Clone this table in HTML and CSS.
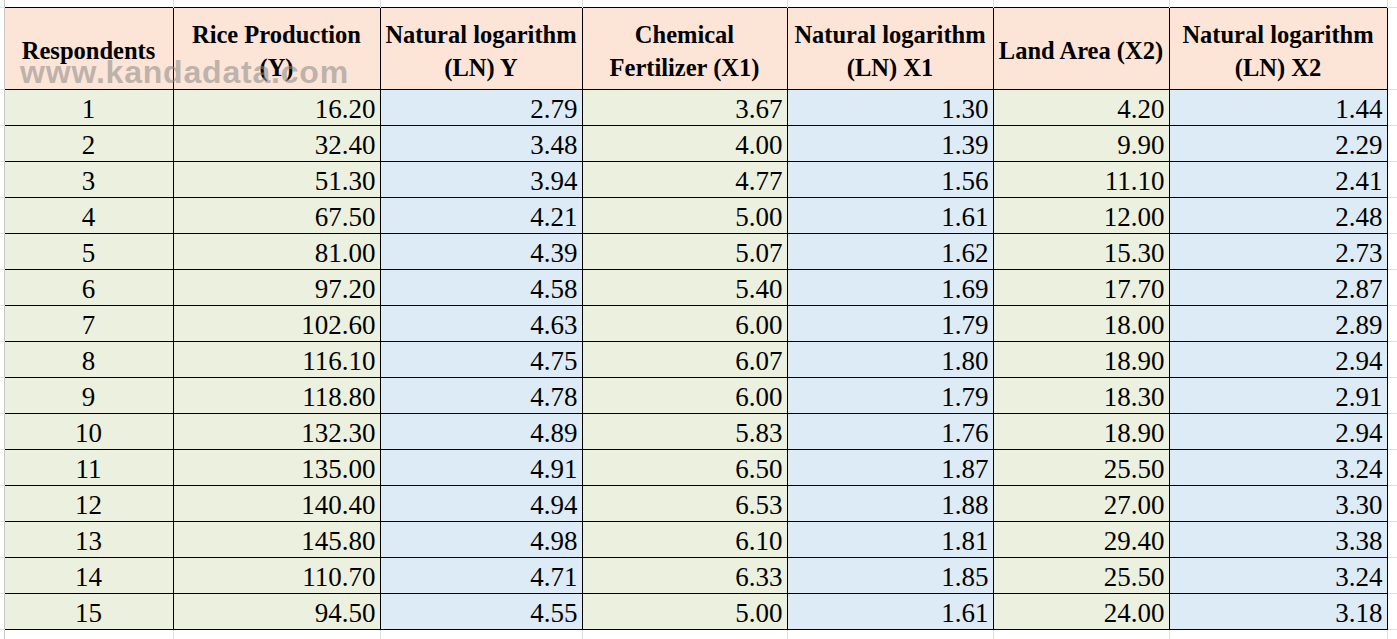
FILE: index.html
```html
<!DOCTYPE html>
<html lang="en">
<head>
<meta charset="utf-8">
<title>Rice production data</title>
<link rel="stylesheet" href="styles.css">
</head>
<body>
<div class="sheet">
  <table class="grid">
    <colgroup>
      <col class="c-edge">
      <col class="c-resp">
      <col class="c-y">
      <col class="c-lny">
      <col class="c-x1">
      <col class="c-lnx1">
      <col class="c-x2">
      <col class="c-lnx2">
      <col class="c-right">
    </colgroup>
    <tr class="gap-top">
      <td class="edge"></td><td class="gl"></td><td class="gl"></td><td class="gl"></td><td class="gl"></td><td class="gl"></td><td class="gl"></td><td class="gl"></td><td class="fill"></td>
    </tr>
    <tr class="head">
      <td class="edge"></td>
      <th class="first">Respondents</th>
      <th>Rice Production<br>(Y)</th>
      <th>Natural logarithm<br>(LN) Y</th>
      <th>Chemical<br>Fertilizer (X1)</th>
      <th>Natural logarithm<br>(LN) X1</th>
      <th>Land Area (X2)</th>
      <th>Natural logarithm<br>(LN) X2</th>
      <td class="fill"></td>
    </tr>
    <tr><td class="edge"></td><td class="first g ctr">1</td><td class="g">16.20</td><td class="b">2.79</td><td class="g">3.67</td><td class="b">1.30</td><td class="g">4.20</td><td class="b">1.44</td><td class="fill"></td></tr>
    <tr><td class="edge"></td><td class="first g ctr">2</td><td class="g">32.40</td><td class="b">3.48</td><td class="g">4.00</td><td class="b">1.39</td><td class="g">9.90</td><td class="b">2.29</td><td class="fill"></td></tr>
    <tr><td class="edge"></td><td class="first g ctr">3</td><td class="g">51.30</td><td class="b">3.94</td><td class="g">4.77</td><td class="b">1.56</td><td class="g">11.10</td><td class="b">2.41</td><td class="fill"></td></tr>
    <tr><td class="edge"></td><td class="first g ctr">4</td><td class="g">67.50</td><td class="b">4.21</td><td class="g">5.00</td><td class="b">1.61</td><td class="g">12.00</td><td class="b">2.48</td><td class="fill"></td></tr>
    <tr><td class="edge"></td><td class="first g ctr">5</td><td class="g">81.00</td><td class="b">4.39</td><td class="g">5.07</td><td class="b">1.62</td><td class="g">15.30</td><td class="b">2.73</td><td class="fill"></td></tr>
    <tr><td class="edge"></td><td class="first g ctr">6</td><td class="g">97.20</td><td class="b">4.58</td><td class="g">5.40</td><td class="b">1.69</td><td class="g">17.70</td><td class="b">2.87</td><td class="fill"></td></tr>
    <tr><td class="edge"></td><td class="first g ctr">7</td><td class="g">102.60</td><td class="b">4.63</td><td class="g">6.00</td><td class="b">1.79</td><td class="g">18.00</td><td class="b">2.89</td><td class="fill"></td></tr>
    <tr><td class="edge"></td><td class="first g ctr">8</td><td class="g">116.10</td><td class="b">4.75</td><td class="g">6.07</td><td class="b">1.80</td><td class="g">18.90</td><td class="b">2.94</td><td class="fill"></td></tr>
    <tr><td class="edge"></td><td class="first g ctr">9</td><td class="g">118.80</td><td class="b">4.78</td><td class="g">6.00</td><td class="b">1.79</td><td class="g">18.30</td><td class="b">2.91</td><td class="fill"></td></tr>
    <tr><td class="edge"></td><td class="first g ctr">10</td><td class="g">132.30</td><td class="b">4.89</td><td class="g">5.83</td><td class="b">1.76</td><td class="g">18.90</td><td class="b">2.94</td><td class="fill"></td></tr>
    <tr><td class="edge"></td><td class="first g ctr">11</td><td class="g">135.00</td><td class="b">4.91</td><td class="g">6.50</td><td class="b">1.87</td><td class="g">25.50</td><td class="b">3.24</td><td class="fill"></td></tr>
    <tr><td class="edge"></td><td class="first g ctr">12</td><td class="g">140.40</td><td class="b">4.94</td><td class="g">6.53</td><td class="b">1.88</td><td class="g">27.00</td><td class="b">3.30</td><td class="fill"></td></tr>
    <tr><td class="edge"></td><td class="first g ctr">13</td><td class="g">145.80</td><td class="b">4.98</td><td class="g">6.10</td><td class="b">1.81</td><td class="g">29.40</td><td class="b">3.38</td><td class="fill"></td></tr>
    <tr><td class="edge"></td><td class="first g ctr">14</td><td class="g">110.70</td><td class="b">4.71</td><td class="g">6.33</td><td class="b">1.85</td><td class="g">25.50</td><td class="b">3.24</td><td class="fill"></td></tr>
    <tr><td class="edge"></td><td class="first g ctr">15</td><td class="g">94.50</td><td class="b">4.55</td><td class="g">5.00</td><td class="b">1.61</td><td class="g">24.00</td><td class="b">3.18</td><td class="fill"></td></tr>
    <tr class="gap-bottom">
      <td class="edge"></td><td class="gl"></td><td class="gl"></td><td class="gl"></td><td class="gl"></td><td class="gl"></td><td class="gl"></td><td class="gl"></td><td class="fill"></td>
    </tr>
  </table>
  <div class="watermark">www.kandadata.com</div>
</div>
</body>
</html>
```

FILE: styles.css
```css
html, body {
  margin: 0;
  padding: 0;
  background: #ffffff;
}

body {
  font-family: "Liberation Serif", "Times New Roman", serif;
  color: #000;
}

.sheet {
  position: relative;
  width: 1397px;
  height: 639px;
  overflow: hidden;
}

.grid {
  border-collapse: collapse;
  table-layout: fixed;
  width: 1397px;
}

.c-edge { width: 4px; }
.c-resp { width: 169px; }
.c-y { width: 207px; }
.c-lny { width: 202px; }
.c-x1 { width: 205px; }
.c-lnx1 { width: 206px; }
.c-x2 { width: 176px; }
.c-lnx2 { width: 218px; }
.c-right { width: 10px; }

/* spreadsheet gridlines outside the bordered range */
.edge,
.fill,
.gl {
  padding: 0;
}

.edge {
  border-right: 1px solid #c9c9c9;
  border-bottom: 1px solid #e2e2e2;
}

.fill {
  border-bottom: 1px solid #dedede;
}

.gl {
  border-right: 1px solid #dedede;
}

.gap-top td {
  height: 7px;
}

.gap-bottom td {
  height: 9px;
  border-bottom: none;
}

/* header */
.head th {
  height: 77px;
  background: #fce4d6;
  border: 1px solid #000;
  font-weight: bold;
  font-size: 24.5px;
  line-height: 33px;
  text-align: center;
  vertical-align: middle;
  padding: 4px 2px 0;
  white-space: nowrap;
}

/* data cells */
.g,
.b {
  height: 34px;
  border: 1px solid #000;
  font-size: 27px;
  line-height: 30px;
  text-align: right;
  vertical-align: bottom;
  padding: 0 4px 1px 4px;
  white-space: nowrap;
}

.g { background: #ebf1de; }
.b { background: #dcebf5; }

.ctr { text-align: center; }

.grid .first {
  border-left: none;
}

.watermark {
  position: absolute;
  left: 20px;
  top: 57px;
  font-family: "Liberation Sans", Arial, sans-serif;
  font-weight: bold;
  font-size: 32px;
  line-height: 31px;
  letter-spacing: 0.8px;
  color: rgba(140, 140, 140, 0.58);
  white-space: nowrap;
  pointer-events: none;
}
```
